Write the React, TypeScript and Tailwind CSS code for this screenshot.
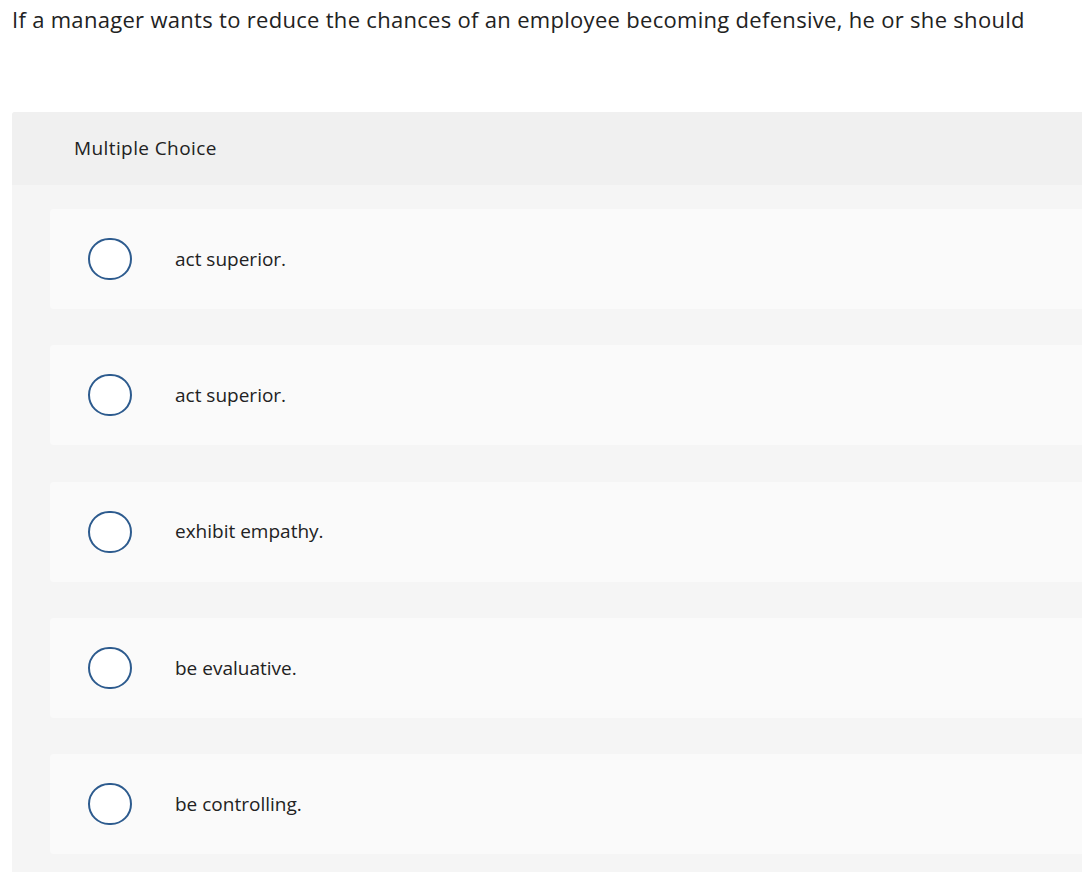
import React from "react";

const options = [
  "act superior.",
  "act superior.",
  "exhibit empathy.",
  "be evaluative.",
  "be controlling.",
];

export default function App() {
  return (
    <div
      className="min-h-[872px] bg-white text-[#222] overflow-hidden"
      style={{ fontFamily: "'Open Sans', 'Noto Sans', sans-serif" }}
    >
      <div className="pl-[12px] pt-[4px] text-[22px] leading-[30px] tracking-[0.3px] whitespace-nowrap">
        If a manager wants to reduce the chances of an employee becoming defensive, he or she should
      </div>
      <div className="ml-[12px] mt-[78px] rounded-tl-[3px] bg-[#f5f5f5]">
        <div className="h-[73px] bg-[#f0f0f0] rounded-tl-[3px] flex items-center pl-[62px] text-[19px] tracking-[0.4px]">
          Multiple Choice
        </div>
        <div className="pl-[38px] pt-[24px] pb-[18px] flex flex-col gap-[36.25px]">
          {options.map((o, i) => (
            <div
              key={i}
              className="h-[100px] bg-[#fafafa] rounded-l-[4px] flex items-center"
            >
              <div className="ml-[38px] w-[44px] h-[42px] rounded-full border-2 border-[#2d5b8e] bg-white shrink-0" />
              <div className="ml-[43px] text-[19px]">{o}</div>
            </div>
          ))}
        </div>
      </div>
    </div>
  );
}
